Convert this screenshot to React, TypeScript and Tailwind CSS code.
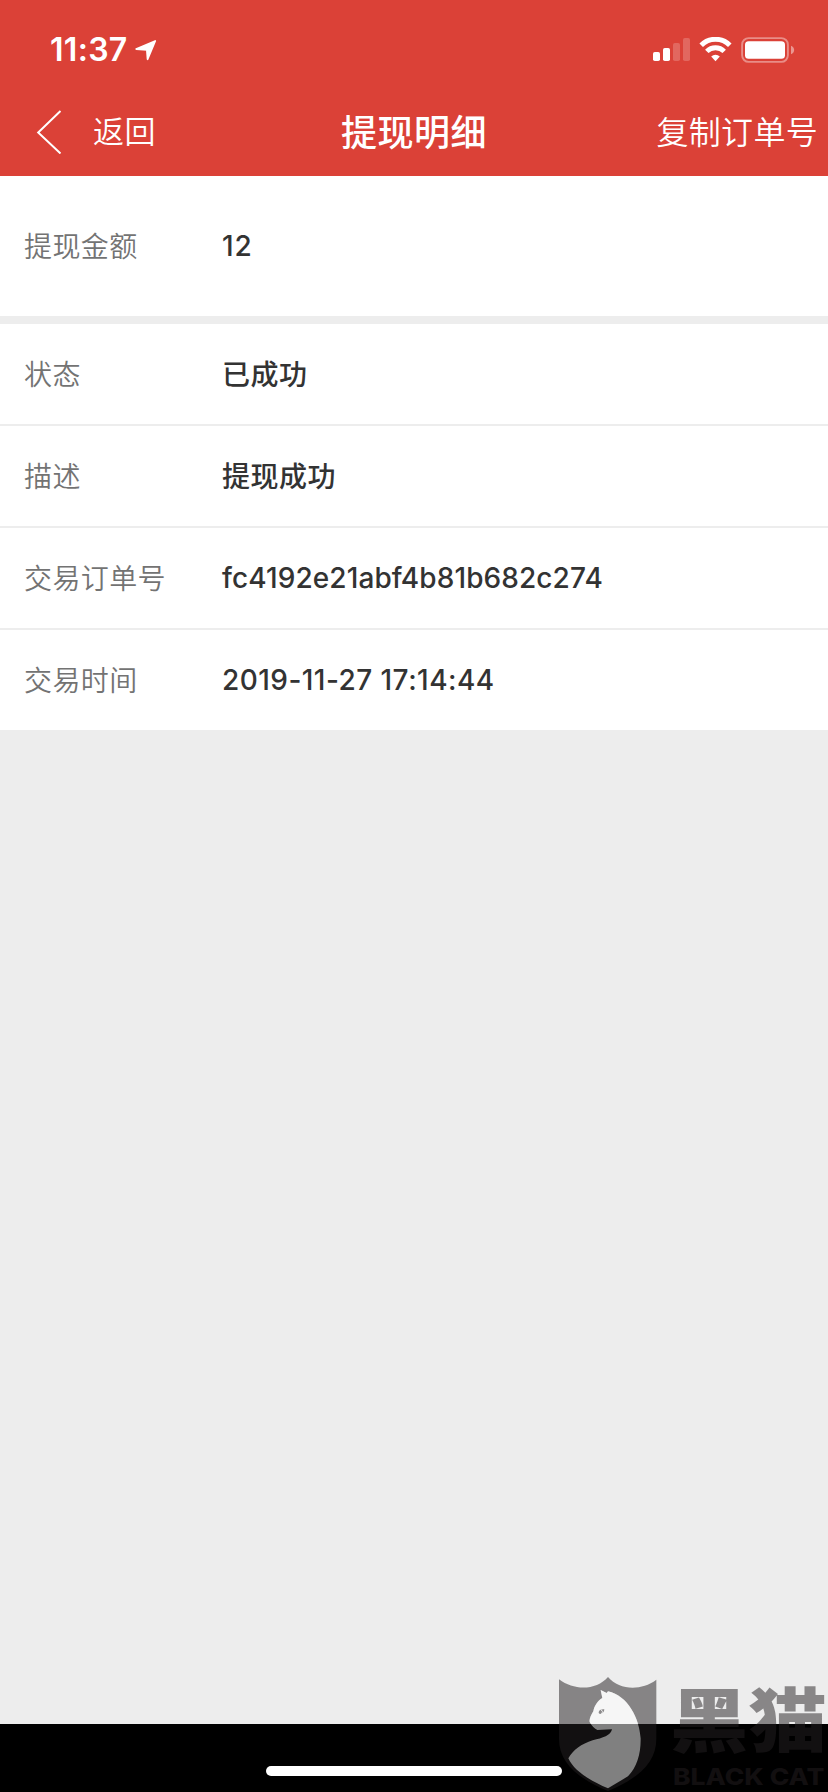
import clsx from 'clsx'

interface Row {
  label: string
  value: string
  valueClass: string
}

const ROWS: Row[] = [
  { label: '状态', value: '已成功', valueClass: 'pt-0.5 tracking-[0.5px]' },
  { label: '描述', value: '提现成功', valueClass: 'pt-0.5 tracking-[0.5px]' },
  { label: '交易订单号', value: 'fc4192e21abf4b81b682c274', valueClass: 'tracking-[0.1px]' },
  { label: '交易时间', value: '2019-11-27 17:14:44', valueClass: 'tracking-[0.45px]' },
]

function LocationArrow() {
  return (
    <svg width="22" height="21" viewBox="0 0 22 21" className="mt-px ml-[7px]" aria-hidden="true">
      <path
        d="M20.2 1 12.6 19.2 11.9 9.9 1.2 9 20.2 1Z"
        fill="#fff"
        stroke="#fff"
        strokeWidth="1.8"
        strokeLinejoin="round"
      />
    </svg>
  )
}

function StatusIcons() {
  return (
    <svg width="142" height="26" viewBox="0 0 142 26" fill="#fff" aria-hidden="true">
      {/* signal */}
      <rect x="0" y="15" width="7" height="9" rx="1.8" />
      <rect x="10" y="11" width="7" height="13" rx="1.8" />
      <rect x="20" y="6" width="7" height="18" rx="1.8" opacity="0.2" />
      <rect x="30" y="1" width="7" height="23" rx="1.8" opacity="0.2" />
      {/* wifi */}
      <g fill="none" stroke="#fff">
        <path d="M48.2 8.2a20.2 20.2 0 0 1 28.6 0" strokeWidth="5" />
        <path d="M53.8 14.4a12.2 12.2 0 0 1 17.4 0" strokeWidth="4.8" />
      </g>
      <path d="M58.2 19.6a6.2 6.2 0 0 1 8.6 0l-4.3 4.6z" />
      {/* battery */}
      <rect x="89.1" y="1.1" width="45.8" height="23.8" rx="6.6" fill="none" stroke="#fff" strokeWidth="1.9" opacity="0.4" />
      <rect x="92" y="4.2" width="40" height="17.6" rx="3.6" />
      <path d="M138 8.8c4.2 1.4 4.2 7 0 8.4z" opacity="0.45" />
    </svg>
  )
}

function InfoRow({ label, value, valueClass }: Row) {
  return (
    <div className="flex h-[102px] items-center border-b-2 border-[#ededed] bg-white pl-6 text-[28px] last:h-[100px] last:border-b-0">
      <span className="w-[198px] pt-0.5 font-[350] tracking-[0.4px] text-[#737373]">{label}</span>
      <span className={clsx('font-medium text-[#333]', valueClass)}>{value}</span>
    </div>
  )
}

const CAT =
  'M182 90L187 114C174 122 163 136 160 154C153 166 147 178 149 186C155 198 164 206 172 210L216 208C213 226 188 234 158 241C124 252 99 270 85 295C100 330 145 360 204 385L264 349C291 322 303 280 302 235C298 174 264 108 204 94L200 99Z'

const SHIELD =
  'M57 58C105 94 170 90 204 51C238 90 302 94 349 59V236C349 304 302 352 204 393C106 352 57 304 57 236Z'

function Watermark() {
  return (
    <div className="absolute right-0 bottom-0 flex h-[132px] w-[288px] overflow-hidden">
      <svg width="130" height="132" viewBox="0 0 390 396" className="shrink-0" aria-hidden="true">
        <path fillRule="evenodd" fill="#241f21" fillOpacity="0.51" d={`${SHIELD} ${CAT}`} />
        <path fill="#fff" fillOpacity="0.5" d={CAT} />
        <path d="M176 157c1-6 7-10 17-9c0 7-5 13-12 14c-3 0-5-2-5-5z" fill="#241f21" fillOpacity="0.5" />
        <path d="M183 150c5 1 6 7 1 11" stroke="#f6f6f6" strokeWidth="3" fill="none" />
      </svg>
      <div className="shrink-0 whitespace-nowrap text-[#241f21]/50">
        <div className="mt-[27px] h-[70px] w-[140px] origin-left scale-x-[1.12] text-[70px] leading-[70px] font-black">黑猫</div>
        <div className="mt-[7px] ml-[3px] w-[134px] origin-left scale-x-[1.15] text-[23px] leading-[26px] font-extrabold">BLACK CAT</div>
      </div>
    </div>
  )
}

export default function App() {
  return (
    <div className="relative flex h-[1792px] w-[828px] flex-col overflow-hidden bg-[#ededed] font-[Inter,'Noto_Sans_CJK_SC',sans-serif]">
      <header className="h-[176px] shrink-0 bg-[#db4137] text-white">
        <div className="flex h-[100px] items-center justify-between pr-[33px] pl-[50px]">
          <div className="flex items-center">
            <span className="text-[32px] font-semibold tracking-[0.3px]">11:37</span>
            <LocationArrow />
          </div>
          <StatusIcons />
        </div>
        <div className="grid h-16 grid-cols-[1fr_auto_1fr] items-center">
          <button type="button" className="flex items-center pl-9">
            <svg width="26" height="44" viewBox="0 0 26 44" fill="none" stroke="#fff" strokeWidth="2" aria-hidden="true">
              <path d="M24.5 1 2.2 22.5 24.5 43.5" />
            </svg>
            <span className="ml-[31px] text-[31px] font-[350] tracking-[0.4px]">返回</span>
          </button>
          <h1 className="pt-0.5 text-[36px] leading-none font-medium tracking-[0.5px]">提现明细</h1>
          <button type="button" className="pt-px pr-2.5 text-right text-[32px] font-[350] tracking-[0.3px]">
            复制订单号
          </button>
        </div>
      </header>

      <main className="flex-1">
        <section className="flex h-[140px] items-center bg-white pl-6 text-[28px]">
          <span className="w-[198px] pt-0.5 font-[350] tracking-[0.4px] text-[#737373]">提现金额</span>
          <span className="font-medium tracking-[0.8px] text-[#333]">12</span>
        </section>
        <section className="mt-2">
          {ROWS.map(row => (
            <InfoRow key={row.label} {...row} />
          ))}
        </section>
      </main>

      <footer className="flex h-[68px] shrink-0 justify-center bg-black pt-[42px]">
        <div className="h-2.5 w-[296px] rounded-full bg-white" />
      </footer>

      <Watermark />
    </div>
  )
}
